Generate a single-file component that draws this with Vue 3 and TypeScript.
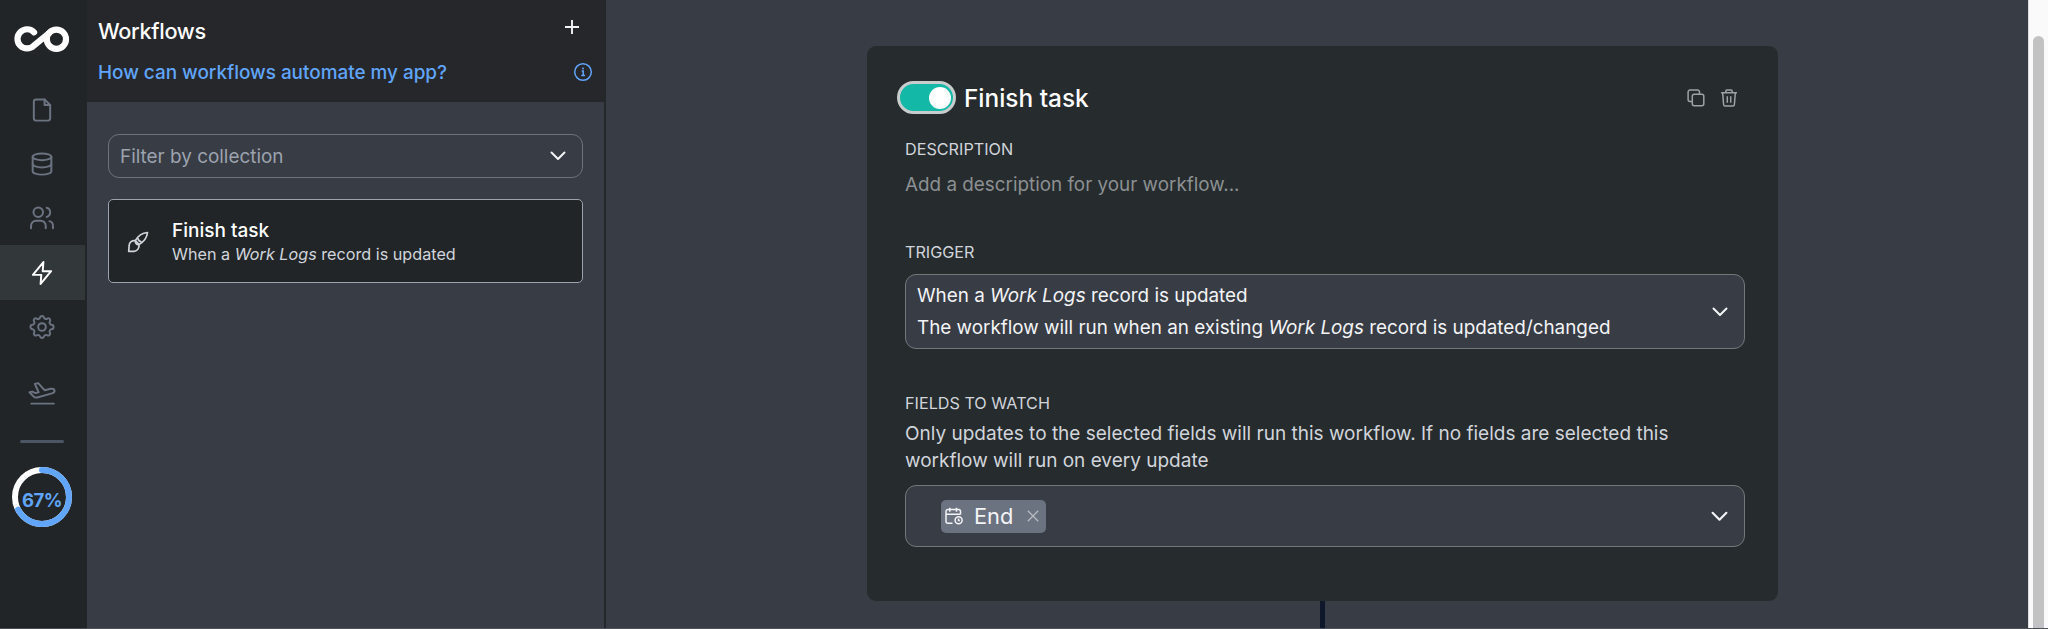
<script setup lang="ts">
interface NavItem {
  id: string
  active?: boolean
  paths: string[]
}

const navItems: NavItem[] = [
  {
    id: 'pages',
    paths: ['M6.500 2.900h7.700L19 7.700v11.400a2 2 0 0 1-2 2H7a2 2 0 0 1-2-2V4.900a2 2 0 0 1 2-2Z', 'M14.200 3v4.700H19'],
  },
  {
    id: 'data',
    paths: [
      'M20 5.800c0 1.600-3.600 2.900-8 2.900S4 7.400 4 5.800s3.600-2.900 8-2.900 8 1.300 8 2.900Z',
      'M4 5.800v12.400c0 1.600 3.600 2.900 8 2.900s8-1.300 8-2.900V5.800',
      'M4 12c0 1.600 3.600 2.900 8 2.900s8-1.300 8-2.900',
    ],
  },
  {
    id: 'users',
    paths: [
      'M12.900 7.100a4.100 4.100 0 1 1-8.200 0 4.100 4.100 0 0 1 8.200 0Z',
      'M2.600 20.800v-2.200a4.200 4.200 0 0 1 4.200-4.200h4.200a4.200 4.200 0 0 1 4.200 4.200v2.200',
      'M16 3.200a4.100 4.100 0 0 1 0 7.900',
      'M18.400 14.700a4.100 4.100 0 0 1 3 4v2.100',
    ],
  },
  { id: 'workflows', active: true, paths: ['M13.200 2.600 4.200 13.600h7.200l-.6 7.800 9-11h-7.200Z'] },
  {
    id: 'settings',
    paths: [
      'M10.400 3.600a1.700 1.700 0 0 1 3.200 0 1.900 1.900 0 0 0 2.900 1.200 1.700 1.700 0 0 1 2.300 2.400 1.900 1.900 0 0 0 1.200 2.900 1.900 1.900 0 0 1 0 3.800 1.900 1.900 0 0 0-1.200 2.900 1.700 1.700 0 0 1-2.300 2.300 1.900 1.900 0 0 0-2.900 1.200 1.700 1.700 0 0 1-3.200 0 1.900 1.900 0 0 0-2.900-1.200 1.700 1.700 0 0 1-2.300-2.300A1.900 1.900 0 0 0 4 13.900a1.900 1.900 0 0 1 0-3.800 1.900 1.900 0 0 0 1.200-2.900 1.700 1.700 0 0 1 2.300-2.400 1.900 1.900 0 0 0 2.900-1.200Z',
      'M15.300 12a3.300 3.300 0 1 1-6.600 0 3.300 3.300 0 0 1 6.600 0Z',
    ],
  },
]

const progress = 67
const ringRadius = 27
const ringLength = 2 * Math.PI * ringRadius
const ringDash = `${(ringLength * progress) / 100} ${ringLength}`
</script>

<template>
  <div class="app">
    <nav class="rail">
      <svg class="logo" viewBox="0 0 56 28" fill="none" stroke="#fff" stroke-width="6.200" stroke-linecap="round">
        <path d="M20.100 7.300A9.600 9.600 0 1 0 19.900 20.600L35.400 7.800" />
        <circle cx="42.400" cy="14.200" r="9.600" />
      </svg>
      <div v-for="item in navItems" :key="item.id" class="rail-item" :class="{ active: item.active }">
        <svg class="rail-icon" viewBox="0 0 24 24">
          <path v-for="d in item.paths" :key="d" :d="d" />
        </svg>
      </div>
      <div class="rail-item publish">
        <svg class="rail-icon" viewBox="0 0 24 24">
          <path d="M2.800 21.100h19.400" />
          <path d="M1.300 11.400 3.600 10.800 6.400 12.100 9.100 11.300 5.900 4.300 8.700 3.500 14.400 9.700 19.400 8.400Q22.300 7.800 22.700 9.700 23.100 11.500 20.500 12.300L7.900 15.800Q6 16.300 4.900 15.100Z" />
        </svg>
      </div>
      <div class="rail-line"></div>
      <div class="ring">
        <svg viewBox="0 0 60 60" fill="none" stroke-width="6">
          <circle cx="30" cy="30" :r="ringRadius" stroke="#fff" />
          <circle cx="30" cy="30" :r="ringRadius" stroke="#60a5fa" stroke-linecap="round" :stroke-dasharray="ringDash" transform="rotate(-90 30 30)" />
        </svg>
        <span class="ring-label">{{ progress }}%</span>
      </div>
    </nav>

    <aside class="panel">
      <header class="panel-head">
        <div class="row title-row">
          <h1>Workflows</h1>
          <svg class="plus" viewBox="0 0 16 16"><path d="M8 1v14M1 8h14" /></svg>
        </div>
        <div class="row help-row">
          <a>How can workflows automate my app?</a>
          <svg class="info" viewBox="0 0 20 20">
            <circle cx="10" cy="10" r="8.300" />
            <path d="M8.600 9.100h1.600v4.300M8.300 13.500h3.700" />
            <circle class="dot" cx="10" cy="6.600" r="1" />
          </svg>
        </div>
      </header>
      <div class="panel-body">
        <div class="filter">
          <span>Filter by collection</span>
          <svg class="chevron" viewBox="0 0 16 10"><path d="M1.500 1.500 8 8l6.500-6.500" /></svg>
        </div>
        <div class="entry">
          <svg class="brush" viewBox="0 0 22 22">
            <path d="M20.500 1.500C15.500 2 10.600 5.600 8.300 9.700l3.700 3.700C16.400 11 20 6.500 20.500 1.500Z" />
            <path d="M8.300 9.700c-3.400-.5-5.900 1.400-6.100 4.300l-.5 6.300h5.500c3.200-.2 5.300-3.300 4.800-6.900" />
            <path d="M8.600 9.800c-.8 2 1.200 4.400 3.500 3.700M10.800 7.200c.3 2 1.800 3.500 3.900 3.900" />
          </svg>
          <div>
            <div class="entry-name">Finish task</div>
            <div class="entry-sub">When a <em>Work Logs</em> record is updated</div>
          </div>
        </div>
      </div>
    </aside>

    <main class="canvas">
      <section class="card">
        <div class="card-head">
          <span class="toggle"><span class="knob"></span></span>
          <h2>Finish task</h2>
          <svg class="action" viewBox="0 0 18 18">
            <rect x="5.300" y="5.300" width="11.500" height="11.500" rx="2" />
            <path d="M5.300 12.500H3a1.900 1.900 0 0 1-1.900-1.900V3A1.900 1.900 0 0 1 3 1.100h7.600A1.900 1.900 0 0 1 12.500 3v2.300" />
          </svg>
          <svg class="action trash" viewBox="0 0 18 18">
            <path d="M1 3.800h16M5.800 3.800V2.200Q5.800 1 7 1h4q1.200 0 1.200 1.200v1.600M2.700 4l.9 11.500q.1 1.500 1.600 1.500h7.600q1.500 0 1.600-1.500L15.300 4M7.300 7.200v6.600M10.700 7.200v6.600" />
          </svg>
        </div>
        <div class="label">DESCRIPTION</div>
        <div class="placeholder">Add a description for your workflow...</div>
        <div class="label trigger-label">TRIGGER</div>
        <div class="select trigger">
          <div>
            <div>When a <em>Work Logs</em> record is updated</div>
            <div>The workflow will run when an existing <em>Work Logs</em> record is updated/changed</div>
          </div>
          <svg class="chevron" viewBox="0 0 16 10"><path d="M1.500 1.500 8 8l6.500-6.500" /></svg>
        </div>
        <div class="label fields-label">FIELDS TO WATCH</div>
        <p class="hint">
          Only updates to the selected fields will run this workflow. If no fields are selected this
          <br />workflow will run on every update
        </p>
        <div class="select fields">
          <div class="chip">
            <svg class="calendar" viewBox="0 0 18 18">
              <path d="M7.500 16.200H3a2 2 0 0 1-2-2V4.500a2 2 0 0 1 2-2h10.500a2 2 0 0 1 2 2v3M1 7.200h14.500M4.800.8v4M11.500.8v4" />
              <circle cx="13.600" cy="13.300" r="3.500" />
              <path d="M13.500 11.500v2h1.400" />
            </svg>
            <span>End</span>
            <svg class="remove" viewBox="0 0 12 12"><path d="m.8.800 10.400 10.400M11.200.8.800 11.200" /></svg>
          </div>
          <svg class="chevron large" viewBox="0 0 16 10"><path d="M1.500 1.500 8 8l6.500-6.500" /></svg>
        </div>
      </section>
      <div class="connector"></div>
    </main>

    <div class="scrollbar"><div class="thumb"></div></div>
  </div>
</template>

<style>
body {
  margin: 0;
  overflow: hidden;
  background: #383c44;
}
</style>

<style scoped>
.app {
  box-sizing: border-box;
  display: flex;
  width: 2048px;
  height: 629px;
  overflow: hidden;
  border-bottom: 1px solid #4c5056;
  background: #383c44;
  color: #fff;
  font-family: Inter, "Liberation Sans", sans-serif;
  font-size: 19px;
}
.app * {
  box-sizing: border-box;
}
svg {
  flex: none;
  display: block;
}
h1,
h2,
p {
  margin: 0;
  font-weight: 400;
}

.rail {
  display: flex;
  flex: none;
  flex-direction: column;
  align-items: center;
  width: 87px;
  padding-right: 3px;
  background: #212528;
}
.logo {
  width: 56px;
  height: 28px;
  margin: 25px 0 29px;
}
.rail-item {
  display: flex;
  flex: none;
  align-items: center;
  justify-content: center;
  align-self: stretch;
  width: 85px;
  height: 54.400px;
  padding: 1px 1px 0 0;
  color: #6b7280;
}
.rail-item.active {
  background: #32373a;
  color: #fff;
}
.rail-item.publish {
  margin-top: 11px;
}
.rail-icon {
  width: 28px;
  height: 28px;
  fill: none;
  stroke: currentColor;
  stroke-width: 1.700;
  stroke-linecap: round;
  stroke-linejoin: round;
}
.rail-line {
  flex: none;
  width: 44px;
  height: 3px;
  margin-top: 21px;
  border-radius: 2px;
  background: #4b5563;
}
.ring {
  display: grid;
  flex: none;
  place-items: center;
  width: 60px;
  height: 60px;
  margin-top: 24px;
}
.ring > * {
  grid-area: 1 / 1;
}
.ring svg {
  width: 60px;
  height: 60px;
}
.ring-label {
  padding-top: 5px;
  color: #60a5fa;
  font-weight: 700;
  font-size: 18.500px;
  letter-spacing: -0.500px;
}

.panel {
  flex: none;
  width: 519px;
  border-right: 2px solid #24282b;
}
.panel-head {
  height: 102px;
  padding: 17px 11px 0 11px;
  background: #26272b;
}
.row {
  display: flex;
  align-items: center;
  justify-content: space-between;
}
.title-row {
  height: 27px;
  padding-right: 13px;
}
.title-row h1 {
  font-weight: 450;
  font-size: 21.700px;
  letter-spacing: -0.320px;
}
.help-row {
  height: 27px;
  margin-top: 14.500px;
}
.help-row a {
  color: #60a5fa;
  font-weight: 500;
  font-size: 18.900px;
}
.plus {
  width: 16px;
  height: 16px;
  margin-top: -7px;
  stroke: #f3f4f6;
  stroke-width: 1.900;
}
.info {
  width: 20px;
  height: 20px;
  fill: none;
  stroke: #60a5fa;
  stroke-width: 1.500;
}
.info .dot {
  fill: #60a5fa;
  stroke: none;
}
.panel-body {
  padding: 32px 21px 0;
}
.filter {
  display: flex;
  align-items: center;
  justify-content: space-between;
  height: 44px;
  padding: 0 16px 0 11px;
  border: 1px solid #6f7276;
  border-radius: 11px;
  color: #9ca3af;
  font-size: 18.900px;
}
.chevron {
  width: 16px;
  height: 10px;
  fill: none;
  stroke: #f3f4f6;
  stroke-width: 2;
  stroke-linecap: round;
  stroke-linejoin: round;
}
.chevron.large {
  width: 17px;
  height: 11px;
}
.entry {
  display: flex;
  align-items: center;
  gap: 23px;
  height: 84px;
  margin-top: 21px;
  padding: 2px 0 0 18px;
  border: 1px solid #9ca3af;
  border-radius: 5px;
  background: #212528;
}
.brush {
  width: 22px;
  height: 22px;
  fill: none;
  stroke: #d1d5db;
  stroke-width: 1.700;
  stroke-linejoin: round;
}
.entry-name {
  font-weight: 450;
  font-size: 19px;
  line-height: 25px;
}
.entry-sub {
  color: #d1d5db;
  font-size: 16.200px;
  line-height: 23px;
}

.canvas {
  display: flex;
  flex: 1;
  flex-direction: column;
  align-items: center;
  padding: 46px 0 0 11px;
}
.card {
  flex: none;
  width: 911px;
  height: 555px;
  padding: 35px 33px 0 38px;
  border-radius: 9px;
  background: #262b2e;
}
.card-head {
  display: flex;
  align-items: center;
  height: 33px;
  margin-left: -8px;
  padding-right: 7px;
}
.toggle {
  display: flex;
  align-items: center;
  justify-content: flex-end;
  width: 59px;
  height: 33px;
  padding-right: 2px;
  border: 3px solid #c9cccd;
  border-radius: 17px;
  background: #14b8a6;
}
.knob {
  width: 22px;
  height: 22px;
  border-radius: 50%;
  background: #fff;
}
.card-head h2 {
  flex: 1;
  margin-left: 8px;
  font-weight: 450;
  font-size: 24.400px;
}
.action {
  width: 18px;
  height: 18px;
  fill: none;
  stroke: #9ca3a6;
  stroke-width: 1.500;
  stroke-linejoin: round;
}
.trash {
  margin-left: 15px;
}
.label {
  height: 22px;
  margin-top: 24px;
  color: #d1d5db;
  font-size: 16.200px;
  line-height: 22px;
}
.placeholder {
  margin-top: 11px;
  color: #8c9092;
  font-size: 18.850px;
  line-height: 28px;
}
.trigger-label {
  margin-top: 42px;
}
.select {
  display: flex;
  align-items: center;
  justify-content: space-between;
  padding: 0 16px 0 11px;
  border: 1px solid #73777b;
  border-radius: 11px;
  background: #383c44;
}
.trigger {
  height: 75px;
  margin-top: 11px;
  color: #f3f4f6;
  font-size: 18.870px;
  line-height: 31.500px;
}
.fields-label {
  margin-top: 43px;
}
.hint {
  margin-top: 6px;
  color: #d1d5db;
  line-height: 27.200px;
  white-space: nowrap;
}
.fields {
  height: 62px;
  margin-top: 11px;
  padding-left: 35px;
}
.chip {
  display: flex;
  align-items: center;
  width: 105px;
  height: 33px;
  padding: 0 7px 0 4px;
  border-radius: 5px;
  background: #6b7280;
  color: #f3f4f6;
  font-size: 21.800px;
}
.calendar {
  width: 18px;
  height: 18px;
  margin-right: 11px;
  fill: none;
  stroke: #f3f4f6;
  stroke-width: 1.500;
}
.remove {
  width: 12px;
  height: 12px;
  margin-left: auto;
  stroke: #b6bac1;
  stroke-width: 1.300;
}
.connector {
  flex: 1;
  width: 5px;
  background: #0f172a;
}

.scrollbar {
  flex: none;
  width: 20px;
  padding: 36px 4px 0;
  border-left: 1px solid #dcdddf;
  background: #fafafa;
}
.thumb {
  width: 11px;
  height: 100%;
  border-radius: 6px 6px 0 0;
  background: #c2c2c2;
}
</style>
